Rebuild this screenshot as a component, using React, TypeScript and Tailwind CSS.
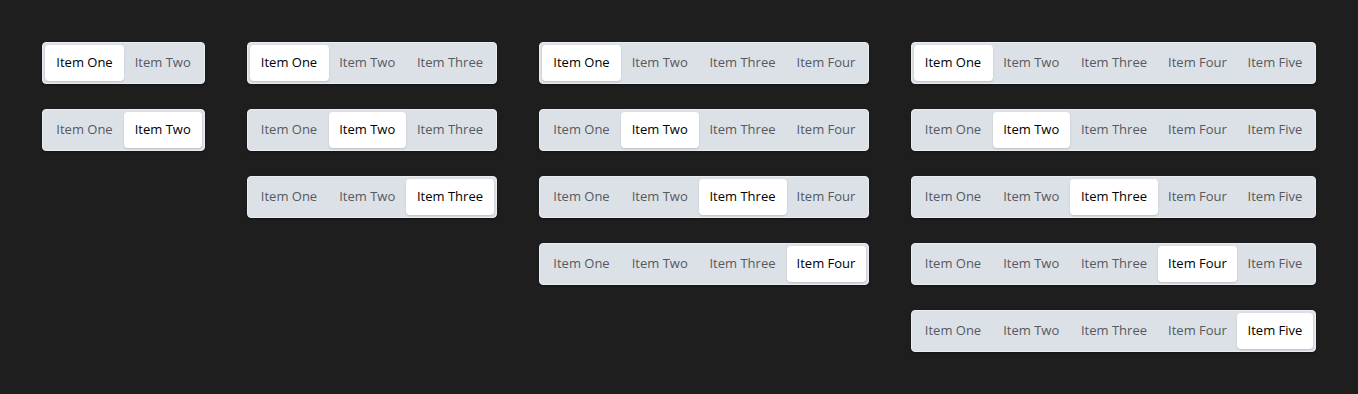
import { useState } from 'react';

const items = [
  { label: 'Item One', width: 'w-[79px]' },
  { label: 'Item Two', width: 'w-[77.5px]' },
  { label: 'Item Three', width: 'w-[88px]' },
  { label: 'Item Four', width: 'w-[79px]' },
  { label: 'Item Five', width: 'w-[76px]' },
];

interface TabBarProps {
  count: number;
  initial: number;
}

const TabBar: React.FC<TabBarProps> = ({ count, initial }) => {
  const [active, setActive] = useState(initial);

  return (
    <div className="flex p-[2px] rounded-[4px] bg-[#dce1e8] border border-[#e9ecf1] shadow-[0_1px_2px_rgba(0,0,0,0.4)]">
      {items.slice(0, count).map((item, i) => (
        <button
          key={item.label}
          onClick={() => setActive(i)}
          className={
            i === active
              ? `${item.width} h-9 rounded-[4px] bg-white text-black shadow-[0_1px_2px_rgba(0,0,0,0.15)] text-[13px] whitespace-nowrap`
              : `${item.width} h-9 rounded-[4px] text-[#56595e] text-[13px] whitespace-nowrap`
          }
        >
          {item.label}
        </button>
      ))}
    </div>
  );
};

export default function App() {
  const groups = [2, 3, 4, 5];

  return (
    <div
      className="min-h-screen bg-[#1e1e1e] flex gap-[42px] p-[42px] items-start"
      style={{ fontFamily: '"Open Sans", "Liberation Sans", sans-serif' }}
    >
      {groups.map((count) => (
        <div key={count} className="flex flex-col gap-[25px] items-start">
          {Array.from({ length: count }).map((_, i) => (
            <TabBar key={i} count={count} initial={i} />
          ))}
        </div>
      ))}
    </div>
  );
}
